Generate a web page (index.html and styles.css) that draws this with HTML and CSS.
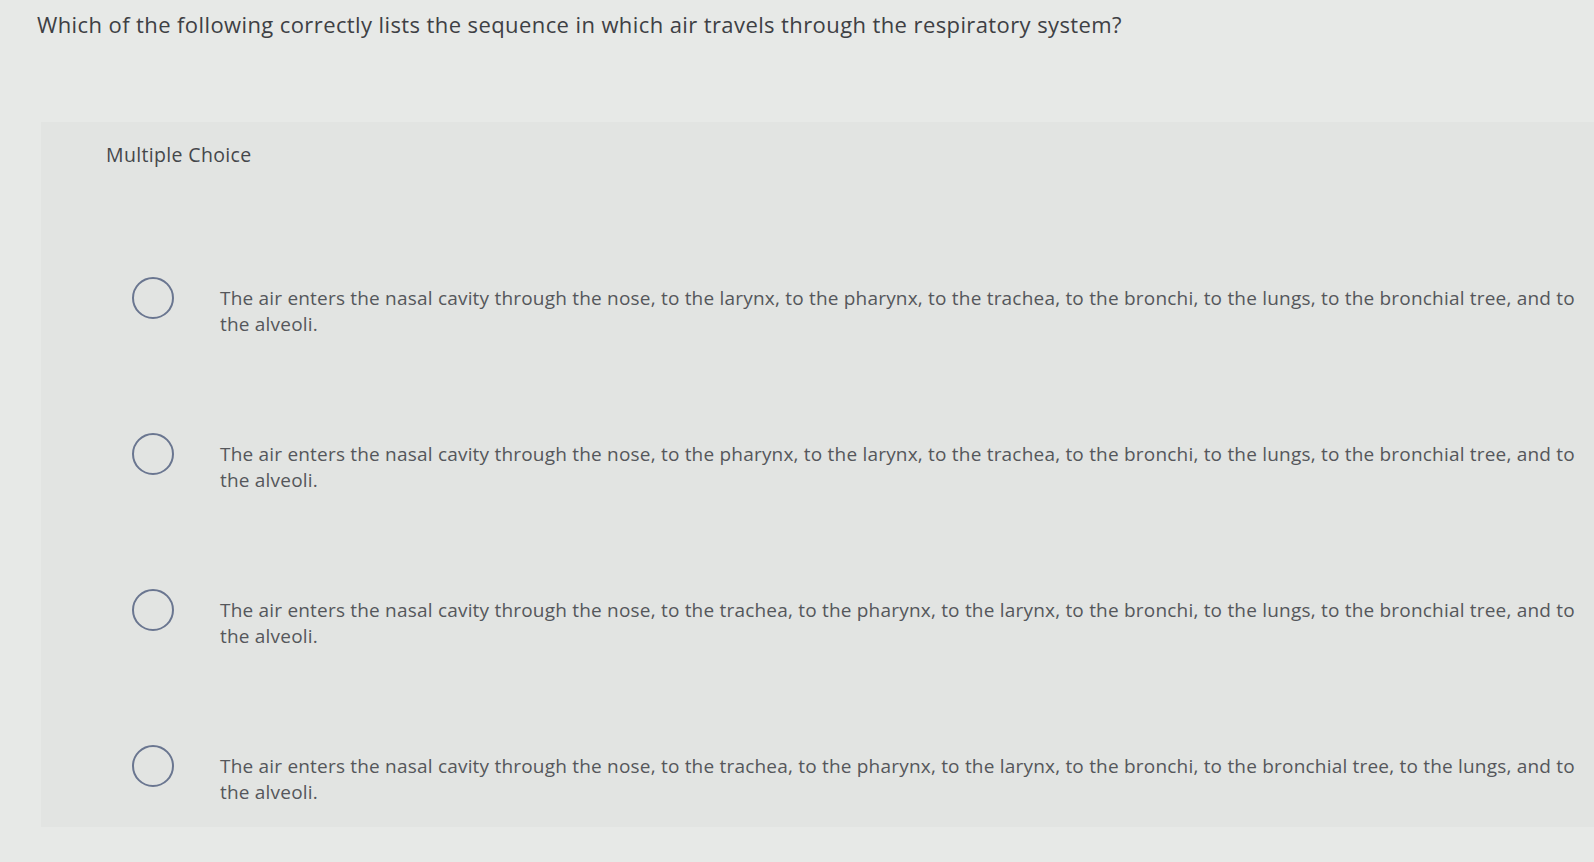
FILE: index.html
```html
<!DOCTYPE html>
<html lang="en">
<head>
<meta charset="utf-8">
<title>Multiple Choice</title>
<link rel="stylesheet" href="styles.css">
</head>
<body>
<div class="page">
  <h1 class="question">Which of the following correctly lists the sequence in which air travels through the respiratory system?</h1>
  <section class="card">
    <div class="label">Multiple Choice</div>
    <div class="options">
      <label class="option">
        <span class="radio"></span>
        <span class="text">The air enters the nasal cavity through the nose, to the larynx, to the pharynx, to the trachea, to the bronchi, to the lungs, to the bronchial tree, and to the alveoli.</span>
      </label>
      <label class="option">
        <span class="radio"></span>
        <span class="text">The air enters the nasal cavity through the nose, to the pharynx, to the larynx, to the trachea, to the bronchi, to the lungs, to the bronchial tree, and to the alveoli.</span>
      </label>
      <label class="option">
        <span class="radio"></span>
        <span class="text">The air enters the nasal cavity through the nose, to the trachea, to the pharynx, to the larynx, to the bronchi, to the lungs, to the bronchial tree, and to the alveoli.</span>
      </label>
      <label class="option">
        <span class="radio"></span>
        <span class="text">The air enters the nasal cavity through the nose, to the trachea, to the pharynx, to the larynx, to the bronchi, to the bronchial tree, to the lungs, and to the alveoli.</span>
      </label>
    </div>
  </section>
</div>
</body>
</html>
```

FILE: styles.css
```css
html, body {
  margin: 0;
  padding: 0;
}
body {
  background: #e7e9e7;
  font-family: "Open Sans", "Noto Sans", sans-serif;
  color: #4f5154;
  width: 1594px;
  height: 862px;
  overflow: hidden;
}
.page {
  padding-top: 12px;
}
.question {
  margin: 0 0 0 37px;
  font-size: 22px;
  letter-spacing: 0.4px;
  line-height: 24px;
  font-weight: 400;
  color: #3e4044;
  white-space: nowrap;
}
.card {
  margin: 86px 0 0 41px;
  background: #e2e4e2;
  padding: 22px 0 22px 65px;
}
.label {
  font-size: 19.5px;
  letter-spacing: 0.35px;
  line-height: 22px;
  color: #45474b;
  margin-bottom: 111px;
}
.options {
  display: flex;
  flex-direction: column;
  gap: 96px;
}
.option {
  display: flex;
  align-items: flex-start;
}
.radio {
  flex: none;
  width: 38px;
  height: 38px;
  border: 2px solid #6a7690;
  border-radius: 50%;
  margin-left: 26px;
}
.text {
  flex: 1;
  margin: 8px 4px 0 46px;
  font-size: 19px;
  letter-spacing: 0.2px;
  line-height: 26px;
  color: #55575b;
}
```
